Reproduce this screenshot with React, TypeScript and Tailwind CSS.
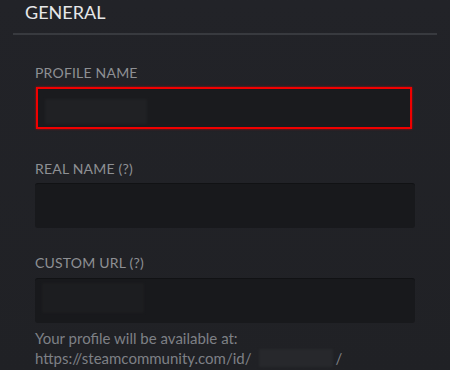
export default function App() {
  return (
    <div
      className="w-[450px] h-[370px] overflow-hidden bg-gradient-to-b from-[#222328] to-[#202125]"
      style={{ fontFamily: 'Lato, "Open Sans", sans-serif' }}
    >
      {/* Header */}
      <div className="pl-[25px] pt-[1px] h-[33px] text-[18px] leading-[22px] text-[#e6e7e9]">GENERAL</div>
      <div className="mx-[13px] h-[2px] bg-[#383a3f]" />

      <div className="px-[35px] pt-[29px]">
        {/* Profile name */}
        <div className="text-[14px] leading-[18px] tracking-[0.2px] text-[#8e9094]">PROFILE NAME</div>
        <div className="mt-[5px] ml-[1px] w-[376px] h-[42px] border-2 border-[#f00000] bg-[#1a1b1e] shadow-[0_0_2px_rgba(255,0,0,0.6)] pl-[7px] pt-[10px]">
          <div className="w-[102px] h-[25px] bg-[#202124] blur-[1px]" />
        </div>

        {/* Real name */}
        <div className="mt-[31px] text-[14px] leading-[18px] tracking-[0.2px] text-[#8e9094]">REAL NAME (?)</div>
        <div className="mt-[5px] w-[380px] h-[45px] rounded-[3px] bg-[#18191c] border-t border-[#111214]" />

        {/* Custom URL */}
        <div className="mt-[26px] text-[14px] leading-[18px] tracking-[0.2px] text-[#8e9094]">CUSTOM URL (?)</div>
        <div className="mt-[6px] w-[380px] h-[45px] rounded-[3px] bg-[#18191c] border-t border-[#111214] pl-[7px] pt-[4px]">
          <div className="w-[102px] h-[30px] bg-[#1c1d20] blur-[1px]" />
        </div>

        <div className="mt-[5px] text-[15px] leading-[20px] text-[#7e8085]">
          <div>Your profile will be available at:</div>
          <div className="flex items-center">
            <span>https://steamcommunity.com/id/</span>
            <span className="ml-[8px] w-[74px] h-[18px] bg-[#27282c] blur-[1px]" />
            <span className="ml-[2px]">/</span>
          </div>
        </div>
      </div>
    </div>
  )
}
